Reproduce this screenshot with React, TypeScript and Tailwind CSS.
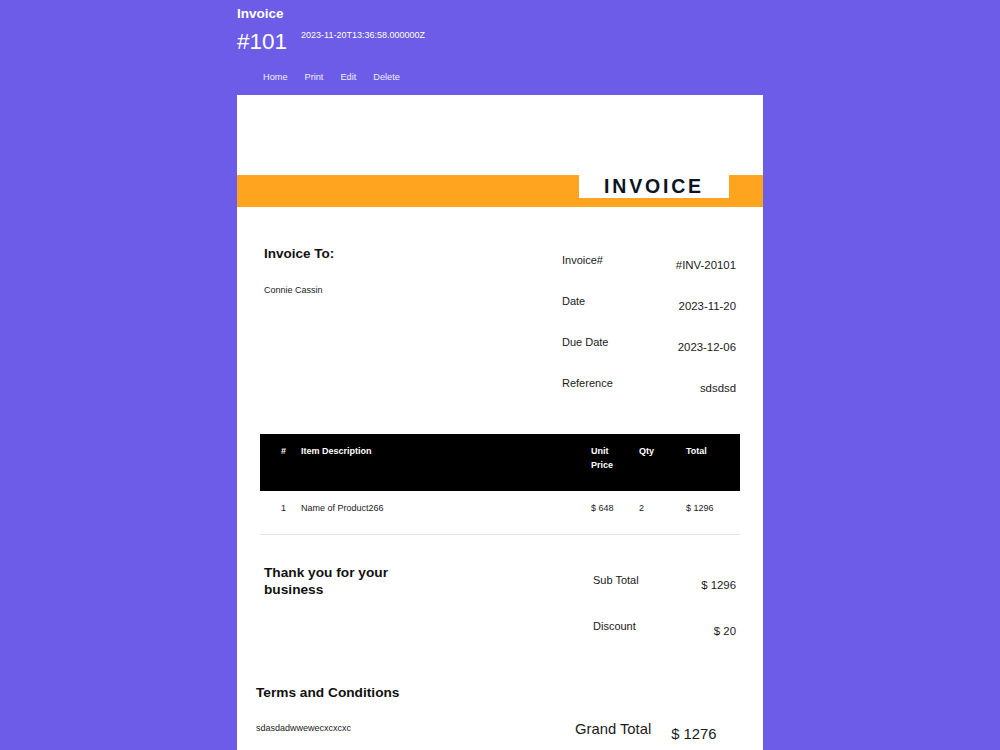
import React from "react";

const meta = [
  { label: "Invoice#", value: "#INV-20101" },
  { label: "Date", value: "2023-11-20" },
  { label: "Due Date", value: "2023-12-06" },
  { label: "Reference", value: "sdsdsd" },
];

const totals = [
  { label: "Sub Total", value: "$ 1296" },
  { label: "Discount", value: "$ 20" },
];

export default function App() {
  return (
    <div className="min-h-screen bg-[#6c5ce7] font-['Liberation_Sans',Arial,sans-serif]">
      <div className="w-[526px] mx-auto">
        {/* page header */}
        <div className="pt-[4px] text-white">
          <h1 className="text-[13.5px] leading-5 font-bold">Invoice</h1>
          <div className="mt-[4px] flex items-start">
            <span className="text-[22.5px] leading-[28px]">#101</span>
            <span className="ml-[14px] mt-[2px] text-[9px] leading-[10px]">
              2023-11-20T13:36:58.000000Z
            </span>
          </div>
          <nav className="mt-[14px] ml-[26px] flex gap-[17px] text-[9.2px] leading-[14px] text-[#f1efff]">
            <a>Home</a>
            <a>Print</a>
            <a>Edit</a>
            <a>Delete</a>
          </nav>
        </div>

        {/* invoice sheet */}
        <div className="mt-[11px] bg-white pb-10 text-[#1a1a1a]">
          <div className="h-[80px]" />
          <div className="h-[32px] bg-[#ffa41f]">
            <div className="ml-[342px] w-[150px] h-[23px] bg-white flex items-center justify-center">
              <span className="text-[19.5px] leading-none font-bold tracking-[2.8px] text-[#0b1424]">
                INVOICE
              </span>
            </div>
          </div>

          {/* bill to + meta */}
          <div className="px-[27px] pt-[37px] flex items-start">
            <div className="w-[298px] pt-[1px]">
              <h2 className="text-[13.5px] leading-[17px] font-bold text-[#111]">Invoice To:</h2>
              <p className="mt-[21.5px] text-[9px] leading-[12px]">Connie Cassin</p>
            </div>
            <div className="flex-1 pt-[9px]">
              {meta.map((m) => (
                <div key={m.label} className="h-[41px] flex justify-between items-start">
                  <span className="text-[11px] leading-[14px]">{m.label}</span>
                  <span className="mt-[5px] text-[11.4px] leading-[14px]">{m.value}</span>
                </div>
              ))}
            </div>
          </div>

          {/* items table */}
          <div className="mx-[23px] mt-[17px] text-[9px] leading-[14px]">
            <div className="h-[57px] pt-[10px] bg-black text-white font-bold grid grid-cols-[41px_290px_48px_47px_1fr]">
              <span className="pl-[21px]">#</span>
              <span>Item Description</span>
              <span>
                Unit
                <br />
                Price
              </span>
              <span>Qty</span>
              <span>Total</span>
            </div>
            <div className="h-[44px] pt-[10px] border-b border-[#e6e6e6] grid grid-cols-[41px_290px_48px_47px_1fr]">
              <span className="pl-[21px]">1</span>
              <span>Name of Product266</span>
              <span>$ 648</span>
              <span>2</span>
              <span>$ 1296</span>
            </div>
          </div>

          {/* thanks + totals */}
          <div className="px-[27px] flex items-start">
            <div className="pt-[28.5px] w-[160px]">
              <h3 className="text-[13.7px] leading-[17px] font-bold text-[#111]">
                Thank you for your business
              </h3>
            </div>
            <div className="ml-auto w-[143px] pt-[38px]">
              {totals.map((t) => (
                <div key={t.label} className="h-[46px] flex justify-between items-start">
                  <span className="text-[11px] leading-[14px]">{t.label}</span>
                  <span className="mt-[4.5px] text-[11.4px] leading-[14px]">{t.value}</span>
                </div>
              ))}
            </div>
          </div>

          {/* terms + grand total */}
          <div className="pl-[19px] pt-[19px] flex items-start">
            <div className="w-[319px]">
              <h3 className="text-[13.7px] leading-[17px] font-bold text-[#111]">
                Terms and Conditions
              </h3>
              <p className="mt-[21px] text-[9px] leading-[12px]">sdasdadwwewecxcxcxc</p>
            </div>
            <div className="flex items-start">
              <span className="mt-[36px] text-[14.8px] leading-[18px]">Grand Total</span>
              <span className="ml-[20px] mt-[41px] text-[14.8px] leading-[18px]">$ 1276</span>
            </div>
          </div>
        </div>
      </div>
    </div>
  );
}
